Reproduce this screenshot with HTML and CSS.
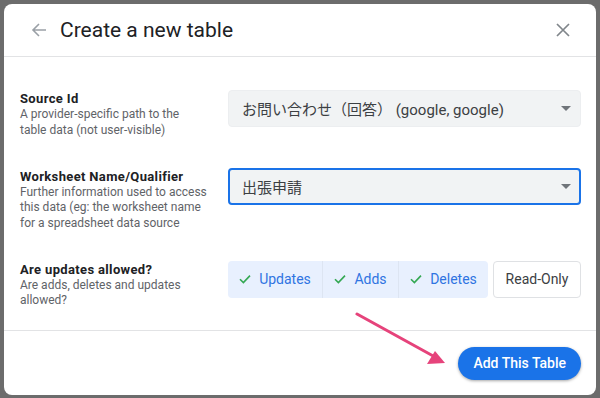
FILE: index.html
```html
<!DOCTYPE html>
<html lang="en">
<head>
  <meta charset="UTF-8">
  <title>Create a new table</title>
  <link rel="stylesheet" href="styles.css">
</head>
<body>
  <div class="dialog">
    <header class="dialog-header">
      <svg class="back-icon" width="16" height="16" viewBox="0 0 16 16">
        <path d="M15 8H2M8 2L2 8l6 6" fill="none" stroke="#9aa0a6" stroke-width="1.6"/>
      </svg>
      <h1>Create a new table</h1>
      <svg class="close-icon" width="14" height="14" viewBox="0 0 14 14">
        <path d="M1 1l12 12M13 1L1 13" fill="none" stroke="#80868b" stroke-width="1.7"/>
      </svg>
    </header>

    <div class="dialog-body">
      <div class="field-row">
        <div class="field-info">
          <div class="field-label">Source Id</div>
          <div class="field-desc">A provider-specific path to the<br>table data (not user-visible)</div>
        </div>
        <div class="select">
          <span>お問い合わせ（回答） (google, google)</span>
          <span class="caret"></span>
        </div>
      </div>

      <div class="field-row">
        <div class="field-info">
          <div class="field-label">Worksheet Name/Qualifier</div>
          <div class="field-desc">Further information used to access this data (eg: the worksheet name for a spreadsheet data source</div>
        </div>
        <div class="select focused">
          <span>出張申請</span>
          <span class="caret"></span>
        </div>
      </div>

      <div class="field-row">
        <div class="field-info">
          <div class="field-label">Are updates allowed?</div>
          <div class="field-desc">Are adds, deletes and updates allowed?</div>
        </div>
        <div class="toggles">
          <div class="toggle-group">
            <div class="toggle on seg-updates">
              <svg width="12" height="10" viewBox="0 0 12 10"><path d="M1 5.2l3.4 3.4L11 1.6" fill="none" stroke="#34a853" stroke-width="1.6"/></svg>
              Updates
            </div>
            <div class="toggle on seg-adds">
              <svg width="12" height="10" viewBox="0 0 12 10"><path d="M1 5.2l3.4 3.4L11 1.6" fill="none" stroke="#34a853" stroke-width="1.6"/></svg>
              Adds
            </div>
            <div class="toggle on seg-deletes">
              <svg width="12" height="10" viewBox="0 0 12 10"><path d="M1 5.2l3.4 3.4L11 1.6" fill="none" stroke="#34a853" stroke-width="1.6"/></svg>
              Deletes
            </div>
          </div>
          <div class="toggle readonly">Read-Only</div>
        </div>
      </div>
    </div>

    <footer class="dialog-footer">
      <button class="add-btn">Add This Table</button>
    </footer>

    <svg class="pointer" width="100" height="60" viewBox="0 0 100 60">
      <path d="M2 3L80 46" stroke="#e6437b" stroke-width="3" stroke-linecap="round"/>
      <path d="M90 52L72 53L80 40Z" fill="#e6437b"/>
    </svg>
  </div>
</body>
</html>
```

FILE: styles.css
```css
* {
  box-sizing: border-box;
}

html, body {
  height: 100%;
}

body {
  margin: 0;
  padding: 4px 4px 3px 4px;
  background: #6c6c6c;
  font-family: Roboto, "Noto Sans CJK JP", sans-serif;
  color: #202124;
}

.dialog {
  position: relative;
  height: 100%;
  background: #fff;
  border-radius: 8px;
  display: flex;
  flex-direction: column;
}

.dialog-header {
  height: 53px;
  display: flex;
  align-items: center;
  padding: 0 0 0 27px;
  border-bottom: 1px solid #e2e3e5;
}

.back-icon {
  margin-right: 13px;
}

.dialog-header h1 {
  flex: 1;
  margin: 0;
  font-size: 21px;
  font-weight: 400;
  color: #202124;
}

.close-icon {
  margin-right: 26px;
}

.dialog-body {
  padding: 33px 15px 21px 16px;
  border-bottom: 1px solid #e2e3e5;
}

.field-row {
  display: flex;
  align-items: flex-start;
  margin-bottom: 29.5px;
}

.field-row:last-child {
  margin-bottom: 0;
}

.field-info {
  width: 208px;
  padding: 1px 19px 0 0;
}

.field-label {
  font-size: 13px;
  font-weight: 700;
  line-height: 16px;
  letter-spacing: 0.35px;
  color: #202124;
}

.field-desc {
  font-size: 12px;
  line-height: 15.5px;
  color: #5f6368;
}

.select {
  flex: 1;
  height: 37px;
  display: flex;
  align-items: center;
  justify-content: space-between;
  padding: 0 9px 0 13px;
  background: #f1f3f4;
  border: 1px solid #eceef0;
  border-radius: 4px;
  font-size: 15px;
  color: #3c4043;
}

.select.focused {
  border: 2px solid #1a73e8;
  padding-left: 12px;
  padding-right: 8px;
}

.caret {
  width: 0;
  height: 0;
  border-left: 5px solid transparent;
  border-right: 5px solid transparent;
  border-top: 5px solid #70757a;
}

.toggles {
  flex: 1;
  display: flex;
  gap: 5px;
}

.toggle-group {
  display: flex;
  background: #e8f0fe;
  border-radius: 4px;
}

.toggle {
  height: 37px;
  display: flex;
  align-items: center;
  justify-content: center;
  gap: 8px;
  font-size: 14px;
}

.toggle.on {
  color: #2f74e2;
  border-left: 1px solid #dde5f2;
}

.toggle.on:first-child {
  border-left: none;
}

.seg-updates {
  width: 94px;
}

.seg-adds {
  width: 76px;
}

.seg-deletes {
  width: 90px;
}

.readonly {
  width: 88px;
  border: 1px solid #dfe1e4;
  border-radius: 4px;
  color: #3c4043;
}

.dialog-footer {
  flex: 1;
  display: flex;
  justify-content: flex-end;
  align-items: flex-start;
  padding: 16px 15px 0 0;
}

.add-btn {
  height: 33px;
  padding: 0 15px;
  background: #1a73e8;
  color: #fff;
  border: none;
  border-radius: 17px;
  font-family: Roboto, sans-serif;
  font-size: 14px;
  font-weight: 500;
  box-shadow: 0 1px 3px rgba(0, 0, 0, 0.35);
  cursor: pointer;
}

.pointer {
  position: absolute;
  left: 351px;
  top: 307px;
}
```
